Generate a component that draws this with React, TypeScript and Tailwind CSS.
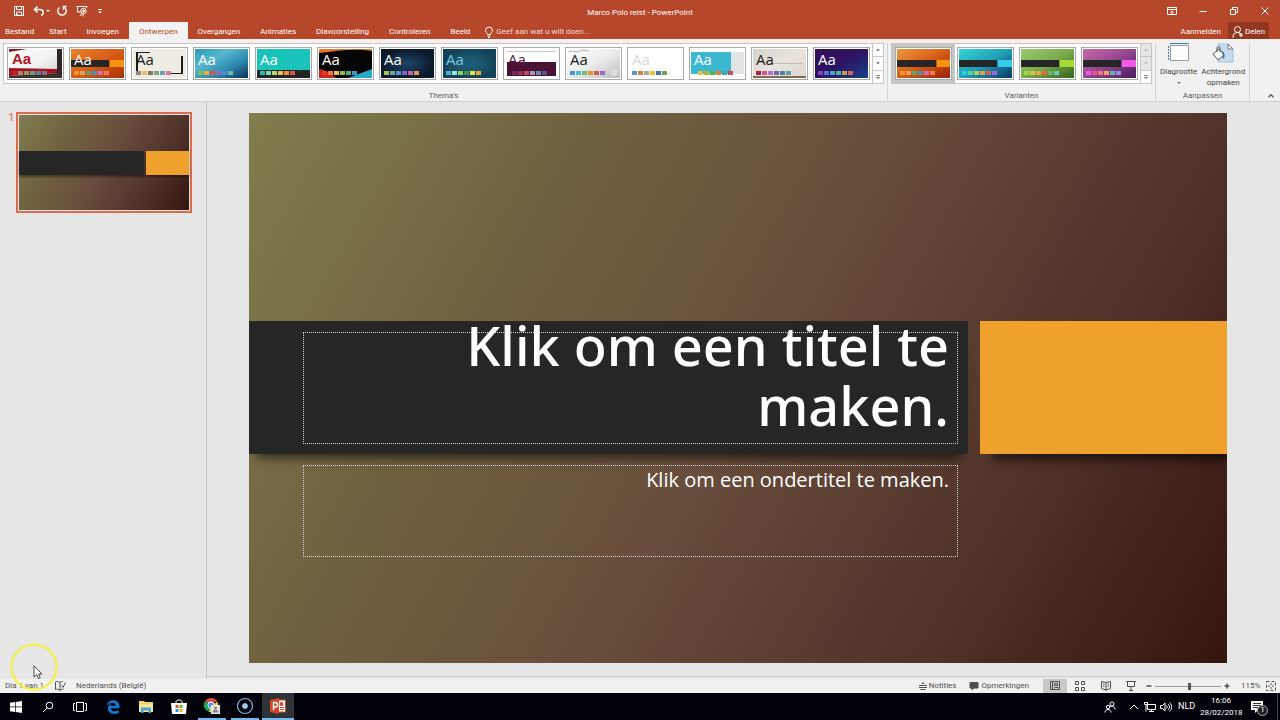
import type { ReactNode } from 'react';
import clsx from 'clsx';

interface Theme {
  name: string;
  text: string;
  swatches: string[];
  art: ReactNode;
  offset?: boolean;
}

const Rects = ({ items }: { items: [number, number, number, number, string][] }) => (
  <>
    {items.map(([x, y, width, height, fill], i) => (
      <rect key={i} x={x} y={y} width={width} height={height} fill={fill} />
    ))}
  </>
);

const Gradient = ({ id, stops, radial }: { id: string; stops: string[]; radial?: boolean }) => {
  const children = stops.map((color, i) => (
    <stop key={i} offset={i / (stops.length - 1)} stopColor={color} />
  ));
  return (
    <>
      <defs>
        {radial ? (
          <radialGradient id={id}>{children}</radialGradient>
        ) : (
          <linearGradient id={id} x1="0" y1="0" x2="1" y2="1">{children}</linearGradient>
        )}
      </defs>
      <rect width="53" height="29" fill={`url(#${id})`} />
    </>
  );
};

const themes: Theme[] = [
  {
    name: 'Badge',
    text: "text-[#b3101c] font-bold font-['Liberation_Sans_Narrow','Liberation_Sans',sans-serif]",
    swatches: ['#c8202c', '#a5857c', '#8a9a6c', '#6b9c92', '#5c7f9c', '#8c6a8c'],
    art: (
      <>
        <Gradient id="t1" stops={['#ffffff', '#f2f2f2', '#c9c9c9']} />
        <path d="M0 0h18L0 3z" fill="#8e1420" />
        <path d="M48 0h5v29h-5z" fill="#2f2826" />
        <path d="M0 19l48 1v4L0 27z" fill="#a5121f" />
        <path d="M0 27l48-3 5 2v3H0z" fill="#3c302c" />
      </>
    ),
  },
  {
    name: 'Berlijn',
    text: 'text-white font-medium',
    swatches: ['#f0952a', '#d6a562', '#5fa36f', '#4f93ad', '#dc6cb8', '#f07c58'],
    art: (
      <>
        <Gradient id="t2" stops={['#e8842c', '#d85c17', '#a93208']} />
        <Rects items={[[0, 11, 38, 7, '#262626'], [39, 11, 14, 7, '#f5930f']]} />
      </>
    ),
  },
  {
    name: 'Bijgesneden',
    text: 'text-[#1c1c1c]',
    swatches: ['#8c8c82', '#e3c067', '#857560', '#80a585', '#6f9fba', '#d8779c'],
    art: (
      <>
        <Rects items={[[0, 0, 53, 29, '#efede3'], [3, 3, 14, 1, '#1c1c1c'], [3, 3, 2, 19, '#1c1c1c'], [48, 7, 2, 18, '#1c1c1c'], [38, 24, 12, 1, '#1c1c1c']]} />
      </>
    ),
  },
  {
    name: 'Circuit',
    text: 'text-white',
    swatches: ['#7fc24f', '#efae45', '#dc5146', '#8e6bc2', '#4c8fd0', '#72b8a6'],
    art: <Gradient id="t4" stops={['#2a97b6', '#57b9ce', '#2a86ad', '#0a2f56']} />,
  },
  {
    name: 'Deel',
    text: 'text-white',
    swatches: ['#1fc0b4', '#6fe0b8', '#b3d76b', '#e8c455', '#ef8d4b', '#dd5353'],
    art: <Rects items={[[0, 0, 53, 21, '#1ac3ba'], [0, 21, 53, 8, '#242424']]} />,
  },
  {
    name: 'Diepte',
    text: 'text-white',
    swatches: ['#e0342c', '#f0783c', '#f0bf45', '#8abf4c', '#4fae86', '#3e97bd'],
    art: (
      <>
        <rect width="53" height="29" fill="#050505" />
        <path d="M0 0h53v2C35-1 18 2 0 4z" fill="#e57a23" />
        <path d="M0 20c8 1 12 5 17 9H0z" fill="#c9271b" />
        <path d="M53 20c-8 3-16 6-24 9h24z" fill="#29a9c8" />
      </>
    ),
  },
  {
    name: 'Hemels',
    text: 'text-white font-medium',
    swatches: ['#a5c453', '#5fae9c', '#5890c8', '#8564bd', '#bf609c', '#e2955a'],
    art: <Gradient id="t7" radial stops={['#1e4468', '#152f4b', '#0b1929']} />,
  },
  {
    name: 'Ion',
    text: 'text-[#7cc4d8]',
    swatches: ['#4fadc9', '#a3e4d9', '#8fd05c', '#4a9148', '#efdc4d', '#e4a93b'],
    art: <Gradient id="t8" radial stops={['#1c6078', '#1a566e', '#134258']} />,
  },
  {
    name: 'Dividend',
    text: 'text-[#4b1535]',
    offset: true,
    swatches: ['#722a5c', '#a52d5d', '#c34a5a', '#9a9db5', '#7785b3', '#4d5798'],
    art: <Rects items={[[0, 0, 53, 29, '#ffffff'], [2, 2, 49, 1, '#cfc6cc'], [2, 13, 49, 14, '#4a1334']]} />,
  },
  {
    name: 'Druppel',
    text: 'text-[#191919]',
    swatches: ['#4195dc', '#4dbfc9', '#75be68', '#e3923e', '#c95b42', '#9b66c4'],
    art: (
      <>
        <Gradient id="t10" stops={['#ffffff', '#ececec', '#bcbcbc']} />
        <path d="M1 3l5-1 4 1 6-2 6 1" stroke="#b5b5b5" fill="none" />
        <circle cx="47" cy="23" r="4" stroke="#cfcfcf" fill="#dddddd" />
      </>
    ),
  },
  {
    name: 'Galerie',
    text: 'text-[#d9d9d9]',
    swatches: ['#5b93c7', '#df7c42', '#a5a5a5', '#edc02f', '#4472b5', '#6fa454'],
    art: <rect width="53" height="29" fill="#ffffff" />,
  },
  {
    name: 'Frame',
    text: 'text-white font-medium',
    offset: true,
    swatches: ['#eebf2e', '#a7b83c', '#5cae57', '#dc7f40', '#3fa9a1', '#c74b59'],
    art: <Rects items={[[0, 0, 53, 29, '#ffffff'], [0, 3, 40, 22, '#3db8d3'], [40, 3, 13, 22, '#e1e3e4']]} />,
  },
  {
    name: 'Houtsoort',
    text: 'text-[#191919]',
    swatches: ['#af1f4a', '#d65092', '#b072d6', '#6f67b0', '#5577a5', '#619aa5'],
    art: (
      <>
        <Gradient id="t13" stops={['#d5d2ca', '#e8e5df', '#dad7cf']} />
        <Rects items={[[14, 14, 35, 1, '#cbb9b0'], [0, 27, 53, 2, '#7d6c4d']]} />
      </>
    ),
  },
  {
    name: 'Organisch',
    text: 'text-white',
    swatches: ['#8b3fbe', '#5375d4', '#45a5c1', '#57b09a', '#d19a53', '#d7664f'],
    art: <Gradient id="t14" stops={['#35105a', '#2c1463', '#17418a']} />,
  },
];

const variants: (Theme & { selected?: boolean })[] = [
  {
    name: 'Oranje',
    selected: true,
    text: '',
    swatches: ['#f0952a', '#d6a562', '#5fa36f', '#4f93ad', '#dc6cb8', '#f07c58'],
    art: (
      <>
        <Gradient id="v1" stops={['#ee9a3c', '#d85c17', '#981f08']} />
        <Rects items={[[0, 11, 39, 7, '#262626'], [40, 11, 13, 7, '#f5930f']]} />
      </>
    ),
  },
  {
    name: 'Blauw',
    text: '',
    swatches: ['#35c9e0', '#62d08d', '#b8cb5c', '#e5a34a', '#d65d5b', '#a266dc'],
    art: (
      <>
        <Gradient id="v2" stops={['#35d5d6', '#1f9fb8', '#0d3564']} />
        <Rects items={[[0, 11, 38, 7, '#262626'], [39, 11, 14, 7, '#36cbe5']]} />
      </>
    ),
  },
  {
    name: 'Groen',
    text: '',
    swatches: ['#a8d83b', '#d7c34f', '#efa347', '#e9663d', '#63b572', '#68cdb5'],
    art: (
      <>
        <Gradient id="v3" stops={['#9ccb70', '#78ab4c', '#35661f']} />
        <Rects items={[[0, 11, 38, 7, '#262626'], [39, 11, 14, 7, '#a6db36']]} />
      </>
    ),
  },
  {
    name: 'Roze',
    text: '',
    swatches: ['#ef58e0', '#ec5592', '#ee7a74', '#f0a069', '#5fb5b5', '#8e91df'],
    art: (
      <>
        <Gradient id="v4" stops={['#c968a8', '#94468f', '#4a1b5c']} />
        <Rects items={[[0, 11, 38, 7, '#262626'], [39, 11, 14, 7, '#f15be6']]} />
      </>
    ),
  },
];

const tabs = ['Start', 'Invoegen', 'Ontwerpen', 'Overgangen', 'Animaties', 'Diavoorstelling', 'Controleren', 'Beeld'];

const Icon = ({ size = 'size-3', children }: { size?: string; children: ReactNode }) => (
  <svg viewBox="0 0 12 12" className={clsx('shrink-0', size)} fill="none" stroke="currentColor" strokeWidth="1">
    {children}
  </svg>
);

const Thumb = ({ theme, selected }: { theme: Theme; selected?: boolean }) => (
  <button
    aria-label={theme.name}
    className={clsx(
      'relative h-[33px] w-[57px] shrink-0 border border-[#a9a9a9] bg-white p-px',
      selected && 'ring-3 ring-[#c5c5c5]',
    )}
  >
    <svg viewBox="0 0 53 29" className="absolute inset-px h-[29px] w-[53px]">{theme.art}</svg>
    <span className="relative flex h-full flex-col justify-between pb-[3px] pl-[3px] font-['Open_Sans','Noto_Sans',sans-serif]">
      <span className={clsx('h-5 text-left text-[15px] leading-5', theme.text)}>{theme.text ? 'Aa' : ''}</span>
      <span className={clsx('flex gap-px', theme.offset && 'pl-1')}>
        {theme.swatches.map((color) => (
          <span key={color} className="h-1 w-[5px]" style={{ backgroundColor: color }} />
        ))}
      </span>
    </span>
  </button>
);

const Scroller = ({ disabled }: { disabled?: boolean }) => (
  <div className="flex w-[11px] flex-col divide-y divide-[#c6c6c6] border-l border-[#c6c6c6] text-[#666]">
    {['M3 7l3-3 3 3z', 'M3 5l3 3 3-3z', 'M3 3h6v1H3zM3 6l3 3 3-3z'].map((d, i) => (
      <button
        key={d}
        aria-label={['Omhoog', 'Omlaag', 'Meer'][i]}
        className={clsx('flex flex-1 items-center justify-center', disabled && i < 2 && 'bg-[#e6e6e6] text-[#b5b5b5]')}
      >
        <svg viewBox="0 0 12 12" className="size-2" fill="currentColor"><path d={d} /></svg>
      </button>
    ))}
  </div>
);

const TitleBar = () => (
  <header className="grid h-[22px] grid-cols-[1fr_auto_1fr] items-center text-white">
    <div className="flex items-center pl-[13px]">
      <button aria-label="Opslaan">
        <Icon><path d="M1.5 1.5h9v9h-9zM3.5 1.5v3h5v-3M3.5 10.5v-3.500h5v3.500M5 10V9" /></Icon>
      </button>
      <button aria-label="Ongedaan maken" className="ml-2 flex items-center">
        <Icon><path d="M4.500 1.500L1.500 4.500l3 3M2 4.500h5c4 0 4 5 1 6" strokeWidth="1.500" /></Icon>
        <svg viewBox="0 0 4 4" className="ml-px size-1" fill="currentColor"><path d="M0 1h4L2 3z" /></svg>
      </button>
      <button aria-label="Opnieuw" className="ml-[6px]">
        <Icon><path d="M3.500 2.500a4.200 4.200 0 1 0 5 0M10.500 1.500H7.500v3.500" strokeWidth="1.400" /></Icon>
      </button>
      <button aria-label="Vanaf begin" className="ml-2">
        <Icon><path d="M.5 1.500h11M1.500 2v5h3M10.500 2v1M4 11l2-3" /><circle cx="7.500" cy="6" r="2.700" /><path d="M7 4.800v2.400L9 6zM7 9v2.500" fill="currentColor" /></Icon>
      </button>
      <button aria-label="Werkbalk aanpassen" className="ml-2">
        <svg viewBox="0 0 8 8" className="size-2" fill="currentColor"><path d="M2 2h4v1H2zM2 4.500h4l-2 2z" /></svg>
      </button>
    </div>
    <h1 className="pt-[3px]">Marco Polo reist - PowerPoint</h1>
    <div className="flex items-center justify-end gap-[19px] pr-[9px]">
      <button aria-label="Weergaveopties voor lint"><Icon><path d="M1.500 2.500h9v7h-9zM1.500 4.500h9M6 9V6M4.500 7.500L6 6l1.500 1.500" /></Icon></button>
      <button aria-label="Minimaliseren"><Icon><path d="M2.500 6.500h7" /></Icon></button>
      <button aria-label="Verkleinen"><Icon><path d="M2.500 4.500h5v5h-5zM4.500 4V2.500h5v5H8" /></Icon></button>
      <button aria-label="Sluiten"><Icon><path d="M2.500 2.500l7 7M9.500 2.500l-7 7" /></Icon></button>
    </div>
  </header>
);

const TabBar = () => (
  <nav className="flex h-[17px] items-stretch text-white">
    <button className="pt-[2px] pr-[5px] pl-[5px]">Bestand</button>
    {tabs.map((tab) => (
      <button
        key={tab}
        className={clsx('px-[10px] pt-[2px]', tab === 'Ontwerpen' && 'bg-[#f4f3f3] text-[#b7472a]')}
      >
        {tab}
      </button>
    ))}
    <label className="flex items-center pt-[2px] pl-[3px]">
      <Icon><path d="M4.500 8.500c0-2-2-2-2-4a3.500 3.500 0 0 1 7 0c0 2-2 2-2 4zM4.500 10h3M5 11.500h2" /></Icon>
      <input
        aria-label="Uitleg"
        placeholder="Geef aan wat u wilt doen..."
        className="w-32 bg-transparent pl-px outline-none placeholder:text-[#f6d9d1] placeholder:opacity-100"
      />
    </label>
    <div className="ml-auto flex pr-[11px]">
      <button className="px-[7px] pt-[2px]">Aanmelden</button>
      <button className="flex items-center gap-px bg-[#943720] px-1 pt-[2px]">
        <Icon><circle cx="5.500" cy="3.500" r="3" /><path d="M1 11.500c0-3 2-5 4.500-5 1 0 2 0 2.500 1M9 7v4M7 9h4" strokeWidth="1.200" /></Icon>
        Delen
      </button>
    </div>
  </nav>
);

const Group = ({ label, className, children }: { label: string; className?: string; children: ReactNode }) => (
  <section className="flex border-r border-[#d2d2d2]">
    <div className={clsx('flex flex-col justify-between', className)}>
      {children}
      <p className="text-center leading-[10px] text-[#605f5f]">{label}</p>
    </div>
  </section>
);

const Ribbon = () => (
  <div className="flex h-[63px] border-b border-[#d0d0d0] bg-[#f1f1f1] pt-1">
    <Group label="Thema's" className="px-[3px]">
      <div className="flex h-[41px] border border-[#c6c6c6] bg-white">
        <div className="flex items-center gap-[5px] pr-[2px] pl-[3px]">
          {themes.map((theme) => <Thumb key={theme.name} theme={theme} />)}
        </div>
        <Scroller />
      </div>
    </Group>
    <Group label="Varianten" className="px-[3px]">
      <div className="flex h-[41px] border border-[#c6c6c6] bg-white">
        <div className="flex items-center gap-[5px] pr-[2px] pl-[3px]">
          {variants.map((theme) => <Thumb key={theme.name} theme={theme} selected={theme.selected} />)}
        </div>
        <Scroller disabled />
      </div>
    </Group>
    <Group label="Aanpassen" className="px-1">
      <div className="flex gap-1 leading-[11px] text-[#444]">
        <button className="flex flex-col items-center gap-px">
          <svg viewBox="0 0 24 22" className="h-[22px] w-6" fill="none">
            <path d="M3.500 2.500h18v15h-18z" fill="#fff" stroke="#9a9a9a" />
            <path d="M3 .5h19" stroke="#3f7fb0" />
            <path d="M1.500 3v15" stroke="#3f7fb0" strokeDasharray="2 1" />
          </svg>
          Diagrootte
          <svg viewBox="0 0 4 4" className="mt-[3px] size-1" fill="#777"><path d="M0 1h4L2 3z" /></svg>
        </button>
        <button className="flex flex-col items-center gap-px">
          <svg viewBox="0 0 24 22" className="h-[22px] w-6" fill="none">
            <path d="M7 1h10l5 5v13H7z" fill="#c5dbef" stroke="#a9c2da" />
            <path d="M17 1v5h5z" fill="#fff" stroke="#777" />
            <path d="M2 11l6-5 5 6-6 5z" fill="#fff" stroke="#555" />
            <path d="M6 9V5c0-2 3-2 3 0v4" stroke="#555" />
            <path d="M11 8c3 1 3 5 2 8-2-1-2-3-1-4z" fill="#3f72a3" />
          </svg>
          <span>Achtergrond<br />opmaken</span>
        </button>
      </div>
    </Group>
    <button aria-label="Lint samenvouwen" className="mt-auto mr-1 ml-auto text-[#555]">
      <Icon size="size-[10px]"><path d="M3 7.500l3-3 3 3" strokeWidth="1.500" /></Icon>
    </button>
  </div>
);

const slideBg = 'bg-[linear-gradient(120deg,#807d4e_0%,#706340_25%,#684e3c_50%,#4d3028_78%,#351510_100%)]';

const Thumbnails = () => (
  <aside className="w-[207px] shrink-0 border-r border-[#c8c8c8] pt-[10px]">
    <ol className="flex">
      <li className="flex w-full">
        <span className="w-4 pr-[2px] text-right text-[10px] leading-3 text-[#d35f45]">1</span>
        <button aria-label="Dia 1" className="h-[101px] w-44 border-2 border-[#dc6a4e] p-px">
          <span className={clsx('flex h-full flex-col justify-center', slideBg)}>
            <span className="flex h-6 gap-[2px]">
              <span className="flex-[126] bg-[#262626] shadow-[0_2px_2px_rgba(0,0,0,0.4)]" />
              <span className="flex-[43] bg-[#eea22d] shadow-[0_2px_2px_rgba(0,0,0,0.4)]" />
            </span>
          </span>
        </button>
      </li>
    </ol>
  </aside>
);

const Slide = () => (
  <article className={clsx('grid aspect-video w-full grid-rows-[208fr_133fr_209fr] overflow-hidden text-white', slideBg)}>
    <div />
    <div className="grid min-h-0 grid-cols-[719fr_247fr] grid-rows-[minmax(0,1fr)] gap-3">
      <div className="flex bg-[#262626] pt-[11px] pr-[10px] pb-[10px] pl-[54px] shadow-[0_12px_10px_-8px_rgba(0,0,0,0.6)]">
        <div className="flex w-full items-end justify-end border border-dotted border-[#d5d5d5] px-2 pb-2">
          <h2 className="text-right font-['Noto_Sans','Open_Sans',sans-serif] text-[54px] leading-[60px] font-medium">
            Klik om een titel te<br />maken.
          </h2>
        </div>
      </div>
      <div className="bg-[#eea22d] shadow-[8px_12px_10px_-6px_rgba(0,0,0,0.6)]" />
    </div>
    <div className="flex pt-[11px] pl-[54px]">
      <p className="h-[92px] w-[655px] border border-dotted border-[#d5d5d5] px-2 text-right font-['Open_Sans','Noto_Sans',sans-serif] text-[20px] leading-7">
        Klik om een ondertitel te maken.
      </p>
    </div>
  </article>
);

const StatusBar = () => (
  <footer className="flex h-[14px] items-stretch bg-[#f1f1f1] text-[#505050]">
    <div className="flex items-center pl-[5px]">
      <span>Dia 1 van 1</span>
      <button aria-label="Spelling" className="ml-[10px]"><Icon><path d="M6 2.500C4 1 2 1.500 1.500 2v7.500c1-.5 3-.5 4.500 1 1-1 2-1.500 3.500-1.500M6 2.500v8M6 2.500c1-1 2-1 3-1M7.500 5.500l1.500 2 2.500-5" /></Icon></button>
      <button className="ml-[10px]">Nederlands (België)</button>
    </div>
    <div className="ml-auto flex items-stretch">
      <button className="flex items-center"><Icon><path d="M2 5.500h8M2 7.500h8M3.500 9.500h5" /><path d="M4.500 4L6 2l1.500 2z" fill="currentColor" stroke="none" /></Icon>Notities</button>
      <button className="ml-3 flex items-center gap-px"><Icon><path d="M2 2.500h8v5.500H6L4 10V8H2z" fill="currentColor" /></Icon>Opmerkingen</button>
      <button aria-label="Normaal" className="ml-[14px] flex w-6 items-center justify-center bg-[#c8c8c8]"><Icon><path d="M1.500 1.500h9v8h-9zM3.500 1.500v8M5.500 3.500h3v2h-3zM5.500 7.500h4" /></Icon></button>
      <button aria-label="Diasorteerder" className="flex w-[26px] items-center justify-center"><Icon><path d="M1.500 1.500h3v3h-3zM7.500 1.500h3v3h-3zM1.500 7.500h3v3h-3zM7.500 7.500h3v3h-3z" /></Icon></button>
      <button aria-label="Leesweergave" className="flex w-[25px] items-center justify-center"><Icon><path d="M6 2.500L1.500 1.500v7L6 10l4.500-1.500v-7zM6 2.500V11M3 4l1.500.5M3 6l1.500.5M9 4l-1.500.5M9 6l-1.500.5" /></Icon></button>
      <button aria-label="Diavoorstelling" className="flex w-[25px] items-center justify-center"><Icon><path d="M1 1.500h10M2.500 2v4.500h7V2M6 6.500v4M4 10.500h4" /></Icon></button>
      <button aria-label="Uitzoomen"><Icon><path d="M3.500 6h5" strokeWidth="1.500" /></Icon></button>
      <input
        type="range"
        aria-label="Zoomen"
        min={0}
        max={100}
        defaultValue={52}
        className="h-[14px] w-[66px] appearance-none bg-transparent [&::-webkit-slider-runnable-track]:h-px [&::-webkit-slider-runnable-track]:bg-[#9a9a9a] [&::-webkit-slider-thumb]:-mt-[3px] [&::-webkit-slider-thumb]:h-[7px] [&::-webkit-slider-thumb]:w-[3px] [&::-webkit-slider-thumb]:appearance-none [&::-webkit-slider-thumb]:bg-[#555]"
      />
      <button aria-label="Inzoomen"><Icon><path d="M3.500 6h5M6 3.500v5" strokeWidth="1.500" /></Icon></button>
      <button className="ml-2 w-[18px]">115%</button>
      <button aria-label="Passend maken" className="mr-[3px] ml-[6px]"><Icon><path d="M1.500 1.500h9v9h-9z" strokeDasharray="3 2" /><path d="M6 3v2M6 7v2M3 6h2M7 6h2" /></Icon></button>
    </div>
  </footer>
);

const Taskbar = () => (
  <div className="flex h-[27px] items-stretch bg-[#02030a] text-white">
    <button aria-label="Start" className="flex w-8 items-center justify-center">
      <svg viewBox="0 0 12 12" className="size-3" fill="#fff"><path d="M0 1.700l5-.7v4.600H0zM5.700.9L12 0v5.600H5.700zM0 6.300h5V11l-5-.7zM5.700 6.300H12V12l-6.300-.9z" /></svg>
    </button>
    <button aria-label="Zoeken" className="flex w-8 items-center justify-center">
      <Icon><circle cx="7.500" cy="4.500" r="3.300" /><path d="M5 7l-4 4" /></Icon>
    </button>
    <button aria-label="Taakweergave" className="flex w-8 items-center justify-center">
      <svg viewBox="0 0 14 12" className="h-3 w-[14px]" fill="none" stroke="#fff"><path d="M3.500 1.500h7v9h-7zM2 2.500H.5v7H2M12 2.500h1.500v7H12" /></svg>
    </button>
    <div className="ml-px flex gap-px">
      <button aria-label="Edge" className="flex w-8 items-center justify-center">
        <svg viewBox="0 0 14 14" className="size-[14px]" fill="#1379d2"><path d="M.5 6.500C1 2.500 3.800.2 7.200.2c4 0 6.300 2.900 6.300 6.300v1.700H4.800c.1 3.600 4.600 3.800 7.800 1.900v2.900c-4.800 2-10.600.8-10.600-4.700 0-2.300 1.300-4 3.200-4.900-.4.600-.5 1.200-.5 2.300h5c.2-3.800-6.500-4-9.200.8z" /></svg>
      </button>
      <button aria-label="Verkenner" className="flex w-8 items-center justify-center">
        <svg viewBox="0 0 14 12" className="h-3 w-[14px]"><path d="M0 0h5l1 1h8v10H0z" fill="#f3cf66" /><path d="M0 3h14v8H0z" fill="#fbe392" /><path d="M2 12V6.500h10V12H9.500V9.500h-5V12z" fill="#46a6d8" /></svg>
      </button>
      <button aria-label="Store" className="flex w-8 items-center justify-center">
        <svg viewBox="0 0 16 16" className="size-4"><path d="M5 4V2.500C5 .5 11 .5 11 2.500V4" fill="none" stroke="#fff" /><path d="M0 4h16l-1 11H1z" fill="#fff" /><path d="M4.500 6h3v3h-3z" fill="#e8502a" /><path d="M8.500 6h3v3h-3z" fill="#7cb52b" /><path d="M4.500 10h3v3h-3z" fill="#1e9de0" /><path d="M8.500 10h3v3h-3z" fill="#f2b61e" /></svg>
      </button>
      <button aria-label="Chrome" className="flex w-8 items-center justify-center">
        <span className="flex h-full w-7 items-center justify-center border-b-2 border-[#76b9ed]">
          <svg viewBox="0 0 18 18" className="size-[18px]">
            <path d="M8 8L1.800 4.500A7.200 7.200 0 0 1 14.500 5H8z" fill="#dd4b3e" />
            <path d="M8 8l-2 7A7.200 7.200 0 0 1 1.800 4.500z" fill="#1da462" />
            <path d="M8 8l6.500-3A7.200 7.200 0 0 1 6 15z" fill="#ffcd46" />
            <circle cx="8" cy="8" r="3.400" fill="#fff" /><circle cx="8" cy="8" r="2.600" fill="#4a8af4" />
            <path d="M8 8h9v9H8z" fill="#e4e4e4" /><circle cx="12.500" cy="11" r="1.500" fill="#888" /><path d="M9.500 15.500c0-4 6-4 6 0z" fill="#888" />
          </svg>
        </span>
      </button>
      <button aria-label="Opname" className="flex w-8 items-center justify-center">
        <span className="flex h-full w-7 items-center justify-center border-b-2 border-[#76b9ed]">
          <svg viewBox="0 0 18 18" className="size-[18px]" fill="none" stroke="#7db4d8"><circle cx="9" cy="9" r="7.500" strokeWidth="1.200" /><circle cx="9" cy="9" r="2.500" fill="#a9d4f0" /></svg>
        </span>
      </button>
      <button aria-label="PowerPoint" className="flex w-8 items-center justify-center border-b-2 border-[#76b9ed] bg-[#2f3338]">
        <svg viewBox="0 0 16 16" className="size-4">
          <path d="M8 2h7.500v12H8z" fill="#fff" stroke="#d24726" />
          <path d="M10 9.500h4M10 11.500h4" stroke="#d24726" /><circle cx="11.500" cy="6" r="2" fill="#d24726" />
          <path d="M0 2l9-2v16l-9-2z" fill="#d24726" />
          <path d="M3.500 12V4.500h1.800c3 0 3 4.500 0 4.500H3.500" fill="none" stroke="#fff" strokeWidth="1.400" />
        </svg>
      </button>
    </div>
    <div className="ml-auto flex items-center">
      <button aria-label="Personen"><Icon><circle cx="8" cy="3" r="2" /><circle cx="4" cy="6" r="1.700" /><path d="M1 11.500c0-4 6-4 6 0M5.500 6.500c2-2.500 5.500-1 5.500 2" /></Icon></button>
      <button aria-label="Verborgen pictogrammen" className="ml-[12px]"><Icon><path d="M2 8l4-4 4 4" /></Icon></button>
      <button aria-label="Netwerk" className="ml-1"><Icon><path d="M3.500 3.500h8v5h-8zM7.500 8.500v2M5 10.500h5M.5 1.500h3v2h-3zM2 3.500v7" /></Icon></button>
      <button aria-label="Volume" className="ml-1"><Icon><path d="M.5 4.500h2l2.500-2.500v8L2.500 7.500h-2zM6.500 4.500c1 1 1 2 0 3M8 3c2 2 2 4 0 6M9.500 1.500c3 3 3 6 0 9" /></Icon></button>
      <button className="ml-[6px] w-4 text-[9px]">NLD</button>
      <button className="ml-[6px] w-[42px] text-center text-[8px] leading-[12px]">16:06<br />28/02/2018</button>
      <button aria-label="Meldingen" className="relative ml-[9px]">
        <svg viewBox="0 0 12 12" className="size-3"><path d="M0 0h12v9H7l-3 3V9H0z" fill="#fff" /><path d="M2 2.500h8M2 4.500h8M2 6.500h5" stroke="#333" /></svg>
        <span className="absolute top-1 left-[6px] flex size-[11px] items-center justify-center rounded-full border border-[#aaa] bg-[#222] text-[8px] leading-none">1</span>
      </button>
      <span className="mr-[2px] ml-[14px] h-full border-l border-[#444]" />
    </div>
  </div>
);

const App = () => {
  return (
    <div className="relative flex min-h-screen w-full flex-col bg-[#e6e6e6] font-['Roboto','Open_Sans',sans-serif] text-[8px]">
      <div className="bg-[#b7472a]">
        <TitleBar />
        <TabBar />
      </div>
      <Ribbon />
      <div className="flex flex-1">
        <Thumbnails />
        <main className="flex flex-1 flex-col justify-between">
          <div className="pt-[11px] pr-[53px] pl-[42px]">
            <Slide />
          </div>
          <div className="h-[3px] border-t border-[#cfcfcf]" />
        </main>
      </div>
      <StatusBar />
      <Taskbar />
      <svg viewBox="0 0 48 48" className="pointer-events-none absolute bottom-[29px] left-[10px] size-12" fill="none">
        <circle cx="24" cy="24" r="22.500" stroke="#f3ee3a" strokeWidth="2.500" strokeOpacity="0.850" />
        <path d="M24 23v11l2.600-2.400 1.800 4 1.800-.8-1.700-3.800H32z" fill="#fff" stroke="#222" strokeWidth="0.800" />
      </svg>
    </div>
  );
};

export default App;
